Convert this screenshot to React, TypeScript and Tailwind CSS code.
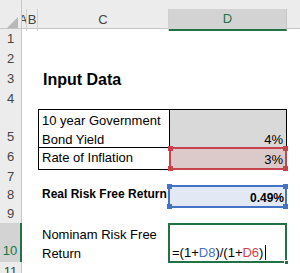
import React from "react";

const font = { fontFamily: '"Liberation Sans", Arial, sans-serif' };

const cols = "grid grid-cols-[22px_5px_11px_131px_118px_1fr]";

type RowProps = {
  n: number;
  h: string;
  active?: boolean;
  c?: React.ReactNode;
  d?: React.ReactNode;
  cClass?: string;
  dClass?: string;
};

const Row: React.FC<RowProps> = ({ n, h, active, c, d, cClass = "", dClass = "" }) => (
  <div className={`${cols} ${h}`}>
    <div
      className={`flex items-end justify-center pb-[2px] border-b border-[#d5d5d5] text-[13px] ${
        active
          ? "bg-[#d3d3d3] border-r-2 border-r-[#217346] text-[#217346]"
          : "bg-[#ececec] border-r border-r-[#c6c6c6] text-[#444]"
      }`}
    >
      {n}
    </div>
    <div />
    <div />
    <div className={`relative ${cClass}`}>{c}</div>
    <div className={`relative ${dClass}`}>{d}</div>
    <div />
  </div>
);

const Handles: React.FC<{ color: string }> = ({ color }) => (
  <>
    <span className={`absolute -left-[3px] -top-[3px] w-[5px] h-[5px] ${color}`} />
    <span className={`absolute -right-[3px] -top-[3px] w-[5px] h-[5px] ${color}`} />
    <span className={`absolute -left-[3px] -bottom-[3px] w-[5px] h-[5px] ${color}`} />
    <span className={`absolute -right-[3px] -bottom-[3px] w-[5px] h-[5px] ${color}`} />
  </>
);

export default function App() {
  return (
    <div className="w-[300px] h-[273px] overflow-hidden bg-white text-black" style={font}>
      {/* column headers */}
      <div className={`${cols} h-[29px] bg-[#ececec] border-b border-[#c6c6c6] text-[13px] text-[#444]`}>
        <div className="relative border-r border-[#c6c6c6]">
          <span className="absolute right-[3px] bottom-[3px] w-0 h-0 border-l-[11px] border-l-transparent border-b-[11px] border-b-[#b8b8b8]" />
        </div>
        <div className="mt-[9px] border-r border-[#d0d0d0] overflow-hidden flex items-center justify-center">
          <span className="-ml-[2px]">A</span>
        </div>
        <div className="mt-[9px] border-r border-[#d0d0d0] flex items-center justify-center">B</div>
        <div className="mt-[9px] border-r border-[#d0d0d0] flex items-center justify-center">C</div>
        <div className="mt-[9px] bg-[#d3d3d3] border-b-2 border-[#217346] border-r border-r-[#c6c6c6] flex items-center justify-center text-[#217346]">
          D
        </div>
        <div className="mt-[9px]" />
      </div>

      <Row n={1} h="h-[20px]" />
      <Row n={2} h="h-[20px]" />
      <Row
        n={3}
        h="h-[20px]"
        c={<div className="pl-[5px] pt-[1px] text-[16px] font-bold leading-[20px]">Input Data</div>}
      />
      <Row n={4} h="h-[20px]" />
      <Row
        n={5}
        h="h-[38px]"
        cClass="border-t border-l border-black"
        dClass="border-t border-l border-r border-black bg-[#d9d9d9]"
        c={
          <div className="pl-[3px] pt-[1px] text-[13px] leading-[19px]">
            10 year Government
            <br />
            Bond Yield
          </div>
        }
        d={<div className="absolute right-[3px] bottom-0 text-[13px] leading-[19px]">4%</div>}
      />
      <Row
        n={6}
        h="h-[20px]"
        cClass="border-t border-l border-b border-black"
        dClass="border-t border-l border-r border-b border-black bg-[#dccaca]"
        c={<div className="pl-[3px] text-[13px] leading-[19px]">Rate of Inflation</div>}
        d={
          <>
            <div className="absolute -left-[1px] -top-[1px] -right-[1px] -bottom-[1px] border-2 border-[#c9434d]">
              <Handles color="bg-[#c9434d]" />
            </div>
            <div className="absolute right-[3px] bottom-0 text-[13px] leading-[19px]">3%</div>
          </>
        }
      />
      <Row n={7} h="h-[18px]" />
      <Row
        n={8}
        h="h-[19px]"
        dClass="bg-[#e2e9f4]"
        c={<div className="pl-[4px] text-[12px] font-bold leading-[19px] whitespace-nowrap">Real Risk Free Return</div>}
        d={
          <>
            <div className="absolute -left-[1px] top-0 right-0 bottom-0 border-2 border-[#4472c4]">
              <Handles color="bg-[#4472c4]" />
            </div>
            <div className="absolute right-[3px] bottom-0 text-[12px] font-bold leading-[19px]">0.49%</div>
          </>
        }
      />
      <Row n={9} h="h-[19px]" />
      <Row
        n={10}
        h="h-[39px]"
        active
        c={
          <div className="pl-[4px] pt-[2px] text-[13px] leading-[19px]">
            Nominam Risk Free
            <br />
            Return
          </div>
        }
        d={
          <>
            <div className="absolute -left-[1px] top-0 right-0 bottom-0 border-2 border-[#217346]">
              <span className="absolute -right-[4px] -bottom-[4px] w-[5px] h-[5px] bg-[#217346] border border-white" />
            </div>
            <div className="absolute left-[3px] bottom-[1px] text-[13px] leading-[19px] flex items-center whitespace-nowrap">
              <span>=(1+</span>
              <span className="text-[#4472c4]">D8</span>
              <span>)/(1+</span>
              <span className="text-[#d2424c]">D6</span>
              <span>)</span>
              <span className="ml-[2px] w-px h-[15px] bg-black" />
            </div>
          </>
        }
      />
      <Row n={11} h="h-[20px]" />
    </div>
  );
}
